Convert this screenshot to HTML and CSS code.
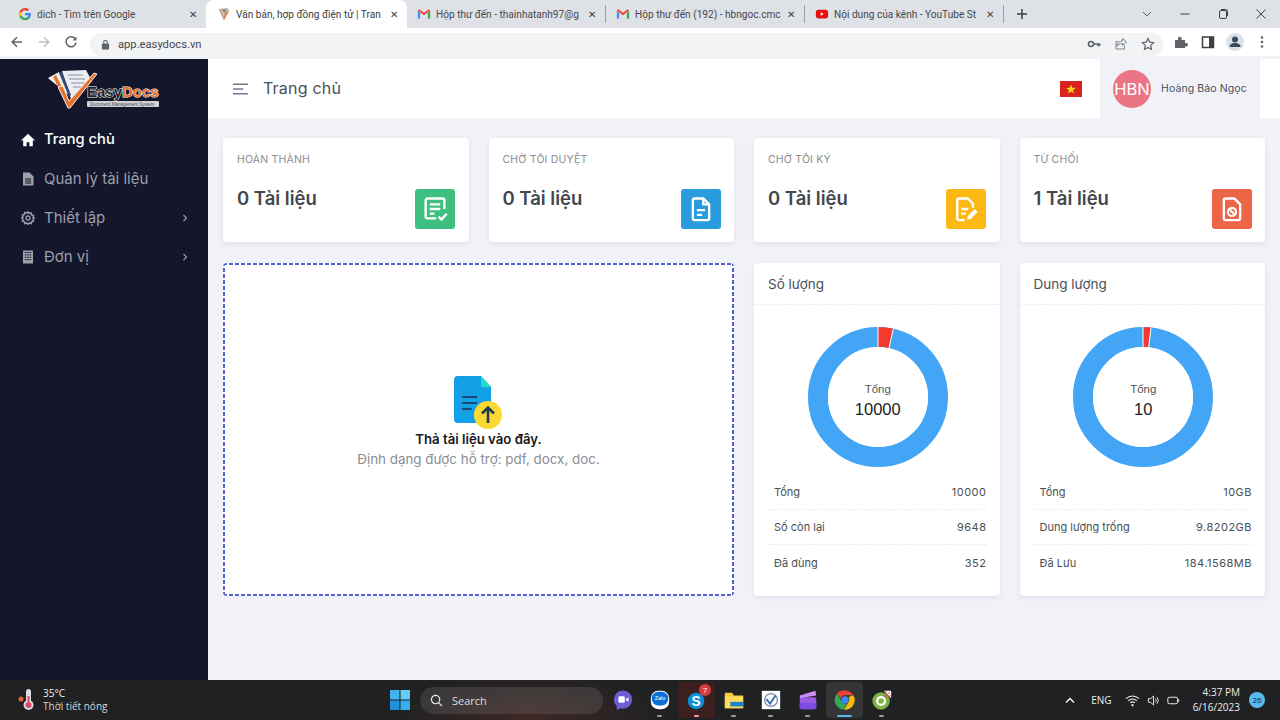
FILE: index.html
```html
<!doctype html>
<html>
  <head>
    <title>Trang chủ</title>
    <link rel="stylesheet" href="styles.css">
  </head>
  <body>
    <!-- Browser tabs -->
    <div class="tabstrip">
      <div class="tab">
        <svg class="fav" viewBox="0 0 16 16"><path d="M14.7 8.200c0-.5 0-1-.1-1.400H8v2.700h3.800c-.2.900-.7 1.600-1.400 2.100v1.700h2.300c1.300-1.200 2-3 2-5.100z" fill="#4285f4"/><path d="M8 15c1.900 0 3.500-.6 4.700-1.700l-2.300-1.700c-.6.400-1.400.7-2.400.7-1.800 0-3.400-1.200-3.900-2.900H1.700v1.800C2.900 13.500 5.300 15 8 15z" fill="#34a853"/><path d="M4.100 9.400c-.3-.9-.3-1.900 0-2.800V4.800H1.700c-1 1.900-1 4.500 0 6.400z" fill="#fbbc05"/><path d="M8 3.800c1 0 2 .4 2.700 1l2-2C11.500 1.700 9.800 1 8 1 5.300 1 2.900 2.500 1.700 4.800l2.400 1.800C4.600 5 6.200 3.800 8 3.800z" fill="#ea4335"/></svg>
        <span class="tab-title">dich - Tìm trên Google</span>
        <span class="tab-x">✕</span>
      </div>
      <div class="tab active">
        <svg class="fav" viewBox="0 0 16 16"><path d="M2 2l10-1 2 3-6 11z" fill="#c9c4bd"/><path d="M2 2l1.500 1L8 13l1-5 4-4 1 0-6 11z" fill="#e8742c"/><path d="M5 2.500l6-.5-2 6z" fill="#8d8f96"/></svg>
        <span class="tab-title">Văn bản, hợp đồng điện tử | Tran</span>
        <span class="tab-x">✕</span>
      </div>
      <div class="tab">
        <svg class="fav" viewBox="0 0 16 16"><path d="M1 4v9h2.500V7z" fill="#4285f4"/><path d="M12.500 7v6H15V4z" fill="#34a853"/><path d="M1 4l7 5.500L15 4l-1.500-1.500L8 6.500 2.500 2.500z" fill="#ea4335"/></svg>
        <span class="tab-title">Hộp thư đến - thainhatanh97@g</span>
        <span class="tab-x">✕</span>
      </div>
      <i class="tab-sep"></i>
      <div class="tab">
        <svg class="fav" viewBox="0 0 16 16"><path d="M1 4v9h2.500V7z" fill="#4285f4"/><path d="M12.500 7v6H15V4z" fill="#34a853"/><path d="M1 4l7 5.500L15 4l-1.500-1.500L8 6.500 2.500 2.500z" fill="#ea4335"/></svg>
        <span class="tab-title">Hộp thư đến (192) - hbngoc.cmc</span>
        <span class="tab-x">✕</span>
      </div>
      <i class="tab-sep"></i>
      <div class="tab">
        <svg class="fav" viewBox="0 0 16 16"><rect x="1" y="3" width="14" height="10" rx="3" fill="#e60f12"/><path d="M6.500 6v4L10 8z" fill="#fff"/></svg>
        <span class="tab-title">Nội dung của kênh - YouTube St</span>
        <span class="tab-x">✕</span>
      </div>
      <i class="tab-sep"></i>
      <svg class="tab-plus" viewBox="0 0 12 12"><path d="M6 1v10M1 6h10" stroke="#3c4043" stroke-width="1.500"/></svg>
      <div class="win-btns">
        <svg viewBox="0 0 12 12"><path d="M2 4l4 4 4-4" fill="none" stroke="#5f6368"/></svg>
        <svg viewBox="0 0 12 12"><path d="M1.500 6h9" stroke="#3c4043"/></svg>
        <svg viewBox="0 0 12 12"><rect x="2.500" y="2.500" width="7" height="8" rx="1.500" fill="none" stroke="#3c4043"/><path d="M4 1.500h4.500q2 0 2 2V8" fill="none" stroke="#3c4043"/></svg>
        <svg viewBox="0 0 12 12"><path d="M1.500 1.500l9 9M10.500 1.500l-9 9" stroke="#3c4043"/></svg>
      </div>
    </div>

    <!-- Browser toolbar -->
    <div class="toolbar">
      <div class="nav-btns">
        <svg viewBox="0 0 14 14"><path d="M12 7H2.500M7 2.200L2.200 7 7 11.800" fill="none" stroke="#5f6368" stroke-width="1.500"/></svg>
        <svg viewBox="0 0 14 14"><path d="M2 7h9.500M7 2.200L11.800 7 7 11.800" fill="none" stroke="#bdc1c6" stroke-width="1.500"/></svg>
        <svg viewBox="0 0 14 14"><path d="M11.500 4.500A5 5 0 1 0 12 7.500" fill="none" stroke="#5f6368" stroke-width="1.500"/><path d="M12.500 1.500v4h-4z" fill="#5f6368"/></svg>
      </div>
      <div class="omnibox">
        <svg class="lock" viewBox="0 0 10 12"><rect x="1" y="5" width="8" height="6.500" rx="1" fill="#5f6368"/><path d="M3 5V3.500a2 2 0 0 1 4 0V5" fill="none" stroke="#5f6368" stroke-width="1.200"/></svg>
        <span class="url">app.easydocs.vn</span>
        <div class="omni-icons">
          <svg viewBox="0 0 14 14"><circle cx="4" cy="7" r="2.500" fill="none" stroke="#5f6368" stroke-width="1.600"/><path d="M6.500 7H13M11 7v2.500M12.800 7v2" stroke="#5f6368" stroke-width="1.500"/></svg>
          <svg viewBox="0 0 14 14"><path d="M8.500 1.500l4 3.500-4 3.500V6.500c-3 0-4.500 1-5.500 3 0-3.500 2-5.500 5.500-5.500z" fill="none" stroke="#80868b"/><path d="M10.500 8.500v3.500h-8.500V4.500h2" fill="none" stroke="#80868b"/></svg>
          <svg viewBox="0 0 14 14"><path d="M7 1.500l1.700 3.700 4 .5-3 2.700.8 4L7 10.400l-3.500 2 .8-4-3-2.700 4-.5z" fill="none" stroke="#5f6368" stroke-width="1.200"/></svg>
        </div>
      </div>
      <div class="ext-btns">
        <svg viewBox="0 0 14 14"><path d="M1 5h3V3.500a1.800 1.800 0 0 1 3.600 0V5h3.400v3h1.200a1.800 1.800 0 0 1 0 3.600H11V13H1z" fill="#5f6368"/></svg>
        <svg viewBox="0 0 14 14"><rect x="1.500" y="2" width="11" height="10.500" fill="none" stroke="#3c4043" stroke-width="1.500"/><rect x="8" y="2" width="4.500" height="10.500" fill="#3c4043"/></svg>
        <span class="profile"><svg viewBox="0 0 18 18"><circle cx="9" cy="6.500" r="3" fill="#3c4a5e"/><path d="M3.500 14c0-3 2.500-4 5.500-4s5.500 1 5.500 4z" fill="#3c4a5e"/></svg></span>
        <svg viewBox="0 0 14 14"><circle cx="7" cy="2.500" r="1.300" fill="#5f6368"/><circle cx="7" cy="7" r="1.300" fill="#5f6368"/><circle cx="7" cy="11.500" r="1.300" fill="#5f6368"/></svg>
      </div>
    </div>

    <!-- App -->
    <div class="app">
      <aside class="sidebar">
        <svg class="logo" viewBox="0 0 114 42">
          <path d="M1 9L12 3l12 25z" fill="#f2f2f2"/>
          <path d="M15 2l24-1 6 11-21 18z" fill="#ecedf2"/>
          <path d="M21 6h15M22 10h16M24 14h14M26 18h8" stroke="#8a8fa5" stroke-width="1"/>
          <path d="M6 8l3-2 12 24-2 3z" fill="#e8742c"/>
          <path d="M12 4l3-1 9 23-2 2z" fill="#3a4a78"/>
          <path d="M11 18l5-1 6 15L47 4l3 1-27 34h-2z" fill="#e8742c" stroke="#fff" stroke-width=".9"/>
          <text class="logo-easy" x="40" y="28">Easy</text>
          <text class="logo-docs" x="75" y="28">Docs</text>
          <rect x="40" y="32" width="72" height="6" rx="1" fill="#d0d0d6"/>
          <text class="logo-sub" x="43" y="36.800">Document Management System</text>
        </svg>
        <nav class="menu">
          <a class="menu-item active">
            <svg viewBox="0 0 14 14"><path d="M7 .8L0 7.500h2.200V13.200h3.400V9.200h2.800v4h3.400V7.500H14z" fill="#fff"/></svg>
            <span>Trang chủ</span>
          </a>
          <a class="menu-item">
            <svg viewBox="0 0 14 14"><path d="M2 .5h6.500L12.500 4.500V13.500H2z" fill="#9d9fab"/><path d="M4.200 7h6M4.200 9h6M4.200 11h6" stroke="#14162b"/></svg>
            <span>Quản lý tài liệu</span>
          </a>
          <a class="menu-item">
            <svg viewBox="0 0 14 14"><path d="M7 .8l1.100 1.700 2-.5.500 1.900 1.900.5-.5 2L13.300 7l-1.300 1.200.5 2-1.900.5-.5 1.900-2-.5L7 13.300l-1.100-1.200-2 .5-.5-1.900-1.900-.5.500-2L.7 7l1.300-1.100-.5-2 1.900-.5.500-1.900 2 .5z" fill="none" stroke="#9d9fab" stroke-width="1.500"/><circle cx="7" cy="7" r="2" fill="none" stroke="#9d9fab" stroke-width="1.300"/></svg>
            <span>Thiết lập</span>
            <svg class="chev" viewBox="0 0 8 8"><path d="M2.500 1l3 3-3 3" fill="none" stroke="#9d9fab" stroke-width="1.100"/></svg>
          </a>
          <a class="menu-item">
            <svg viewBox="0 0 14 14"><path d="M2 .5h10v13H2z" fill="#9d9fab"/><path d="M3.800 2.500h1.700M6.200 2.500h1.700M8.600 2.500h1.700M3.800 4.900h1.700M6.200 4.900h1.700M8.600 4.900h1.700M3.800 7.300h1.700M6.200 7.300h1.700M8.600 7.300h1.700M3.800 9.700h1.700M6.200 9.700h1.700M8.600 9.700h1.700" stroke="#14162b"/></svg>
            <span>Đơn vị</span>
            <svg class="chev" viewBox="0 0 8 8"><path d="M2.500 1l3 3-3 3" fill="none" stroke="#9d9fab" stroke-width="1.100"/></svg>
          </a>
        </nav>
      </aside>

      <div class="page">
        <header class="topbar">
          <svg class="burger" viewBox="0 0 18 14"><path d="M1 2h16M1 7h11M1 12h16" stroke="#74788d" stroke-width="1.500"/></svg>
          <span class="page-title">Trang chủ</span>
          <svg class="flag" viewBox="0 0 22 16"><rect width="22" height="16" fill="#d8231f"/><path d="M11 3.500l1.300 3.300 3.500.2-2.700 2.200.9 3.400-3-1.900-3 1.900.9-3.400L6.200 7l3.500-.2z" fill="#fcd116"/></svg>
          <div class="user">
            <span class="avatar">HBN</span>
            <span class="user-name">Hoàng Bảo Ngọc</span>
          </div>
        </header>

        <main class="content">
          <div class="card stat">
            <div class="stat-text">
              <div class="stat-label">Hoàn thành</div>
              <div class="stat-value">0 Tài liệu</div>
            </div>
            <span class="stat-icon green">
              <svg viewBox="0 0 24 24"><path d="M13 20H5.500A1.500 1.500 0 0 1 4 18.500v-14A1.500 1.500 0 0 1 5.500 3h13A1.500 1.500 0 0 1 20 4.500V12" fill="none" stroke="#fff" stroke-width="2"/><path d="M7.500 8h9M7.500 12h9M7.500 16h4" stroke="#fff" stroke-width="2"/><path d="M15 18.500l2.500 2.500 4.500-5" fill="none" stroke="#fff" stroke-width="2"/></svg>
            </span>
          </div>
          <div class="card stat">
            <div class="stat-text">
              <div class="stat-label">Chờ tôi duyệt</div>
              <div class="stat-value">0 Tài liệu</div>
            </div>
            <span class="stat-icon blue">
              <svg viewBox="0 0 24 24"><path d="M6.500 3H14l5 5v12a1.500 1.500 0 0 1-1.500 1.500h-11A1.500 1.500 0 0 1 5 20V4.500A1.500 1.500 0 0 1 6.500 3z" fill="none" stroke="#fff" stroke-width="2"/><path d="M14 3v5h5M8.500 13h7M8.500 17h4.500" fill="none" stroke="#fff" stroke-width="2"/></svg>
            </span>
          </div>
          <div class="card stat">
            <div class="stat-text">
              <div class="stat-label">Chờ tôi ký</div>
              <div class="stat-value">0 Tài liệu</div>
            </div>
            <span class="stat-icon yellow">
              <svg viewBox="0 0 24 24"><path d="M11 21.500H6A1.500 1.500 0 0 1 4.500 20V4.500A1.500 1.500 0 0 1 6 3h7.500l4.500 4.500V11" fill="none" stroke="#fff" stroke-width="2"/><path d="M8 12h6M8 16h4" stroke="#fff" stroke-width="2"/><path d="M13 21l.5-3 6-6 2.500 2.500-6 6z" fill="#fff"/></svg>
            </span>
          </div>
          <div class="card stat">
            <div class="stat-text">
              <div class="stat-label">Từ chối</div>
              <div class="stat-value">1 Tài liệu</div>
            </div>
            <span class="stat-icon red">
              <svg viewBox="0 0 24 24"><path d="M6.500 3H14l5 5v12a1.500 1.500 0 0 1-1.500 1.500h-11A1.500 1.500 0 0 1 5 20V4.500A1.500 1.500 0 0 1 6.500 3z" fill="none" stroke="#fff" stroke-width="2"/><circle cx="12" cy="14.500" r="3.500" fill="none" stroke="#fff" stroke-width="1.800"/><path d="M9.500 12l5 5" stroke="#fff" stroke-width="1.800"/></svg>
            </span>
          </div>

          <div class="dropzone">
            <svg class="drop-icon" viewBox="0 0 48 54">
              <path d="M4 0h23l10 11v32a4 4 0 0 1-4 4H4a4 4 0 0 1-4-4V4a4 4 0 0 1 4-4z" fill="#12a0e6"/>
              <path d="M27 0l10 11H29a2 2 0 0 1-2-2z" fill="#1fdccb"/>
              <path d="M8 21h15M8 27h15M8 33h10" stroke="#174a78" stroke-width="2"/>
              <circle cx="34" cy="39" r="14" fill="#fdd835"/>
              <path d="M34 47V32M28 37.500l6-6 6 6" fill="none" stroke="#1d3d4a" stroke-width="2.600"/>
            </svg>
            <div class="drop-title">Thả tài liệu vào đây.</div>
            <div class="drop-sub">Định dạng được hỗ trợ: pdf, docx, doc.</div>
          </div>

          <div class="card usage">
            <div class="usage-head">Số lượng</div>
            <div class="donut">
              <svg viewBox="0 0 140 140">
                <circle cx="70" cy="70" r="60" fill="none" stroke="#42a5f5" stroke-width="20"/>
                <circle cx="70" cy="70" r="60" fill="none" stroke="#f4392f" stroke-width="20" stroke-dasharray="13.300 364" transform="rotate(-90 70 70)"/>
                <path d="M70 0v21M70 70L85.300 1.700" stroke="#fff" stroke-width="1"/>
                <circle cx="70" cy="70" r="50" fill="#fff"/>
              </svg>
              <div class="donut-text"><span>Tổng</span><b>10000</b></div>
            </div>
            <div class="usage-rows">
              <div class="usage-row"><span>Tổng</span><span>10000</span></div>
              <div class="usage-row"><span>Số còn lại</span><span>9648</span></div>
              <div class="usage-row"><span>Đã dùng</span><span>352</span></div>
            </div>
          </div>

          <div class="card usage">
            <div class="usage-head">Dung lượng</div>
            <div class="donut">
              <svg viewBox="0 0 140 140">
                <circle cx="70" cy="70" r="60" fill="none" stroke="#42a5f5" stroke-width="20"/>
                <circle cx="70" cy="70" r="60" fill="none" stroke="#f4392f" stroke-width="20" stroke-dasharray="6.900 371" transform="rotate(-90 70 70)"/>
                <path d="M70 0v21M70 70L78 .5" stroke="#fff" stroke-width="1"/>
                <circle cx="70" cy="70" r="50" fill="#fff"/>
              </svg>
              <div class="donut-text"><span>Tổng</span><b>10</b></div>
            </div>
            <div class="usage-rows">
              <div class="usage-row"><span>Tổng</span><span>10GB</span></div>
              <div class="usage-row"><span>Dung lượng trống</span><span>9.8202GB</span></div>
              <div class="usage-row"><span>Đã Lưu</span><span>184.1568MB</span></div>
            </div>
          </div>
        </main>
      </div>
    </div>

    <!-- Windows taskbar -->
    <footer class="taskbar">
      <div class="weather">
        <svg viewBox="0 0 18 24"><circle cx="3" cy="11" r="2.500" fill="#e0662a"/><rect x="8" y="1" width="5" height="15" rx="2.500" fill="#d9dde2"/><circle cx="10.500" cy="17" r="5" fill="#d9dde2"/><circle cx="10.500" cy="17" r="3" fill="#d84a6a"/><rect x="9.500" y="8" width="2" height="8" fill="#d84a6a"/></svg>
        <div class="weather-text"><span>35°C</span><span>Thời tiết nóng</span></div>
      </div>
      <div class="task-center">
        <svg class="win" viewBox="0 0 20 20"><rect width="9.500" height="9.500" fill="#3fb4f0"/><rect x="10.500" width="9.500" height="9.500" fill="#63cdf7"/><rect y="10.500" width="9.500" height="9.500" fill="#1e90dc"/><rect x="10.500" y="10.500" width="9.500" height="9.500" fill="#35aeee"/></svg>
        <div class="search">
          <svg viewBox="0 0 14 14"><circle cx="6" cy="6" r="4.500" fill="none" stroke="#e8e8e8" stroke-width="1.300"/><path d="M9.300 9.300L13 13" stroke="#e8e8e8" stroke-width="1.300"/></svg>
          <span>Search</span>
        </div>
        <div class="apps">
          <span class="app-ico"><svg viewBox="0 0 24 24"><path d="M12 1.500a10 10 0 0 1 0 20c-1 0-2-.2-2.800-.4L5 23l.3-4.300A10 10 0 0 1 12 1.500z" fill="#6b5ed6"/><rect x="7" y="8" width="7" height="7" rx="1.500" fill="#fff"/><path d="M15 11l3-2v5l-3-2z" fill="#fff"/></svg></span>
          <span class="app-ico on"><svg viewBox="0 0 24 24"><rect x="2" y="2" width="20" height="20" rx="8" fill="#fff"/><rect x="3" y="3" width="18" height="15" rx="7" fill="#0d6fd8"/><text class="zalo" x="12" y="12.500">Zalo</text></svg></span>
          <span class="app-ico on hot"><svg viewBox="0 0 24 24"><circle cx="11" cy="13" r="9" fill="#0a8fd8"/><text class="skype" x="11" y="18">S</text></svg><i class="task-badge">7</i></span>
          <span class="app-ico on"><svg viewBox="0 0 24 24"><path d="M2 4h8l2 3h10v14H2z" fill="#f7c83b"/><rect x="2" y="8" width="20" height="13" fill="#fddc5c"/><rect x="8" y="14" width="14" height="5" fill="#1a84c9"/></svg></span>
          <span class="app-ico on"><svg viewBox="0 0 24 24"><rect x="2" y="2" width="20" height="20" fill="#fff"/><circle cx="12" cy="12" r="7" fill="none" stroke="#7f8fa8" stroke-width="1.500"/><path d="M7 11l4 5 6-9" fill="none" stroke="#2f6fb0" stroke-width="2"/></svg></span>
          <span class="app-ico on"><svg viewBox="0 0 24 24"><rect x="3" y="9" width="18" height="13" rx="2" fill="#a05be6"/><path d="M3 7l17-5 1 5-18 3z" fill="#c98df5"/><rect x="3" y="15" width="18" height="7" rx="2" fill="#7d4fe0"/></svg></span>
          <span class="app-ico on now"><svg viewBox="0 0 24 24"><path d="M12 1.500a10.500 10.500 0 0 1 9.100 5.300H12a5.200 5.200 0 0 0-4.900 3.500L3.400 5A10.500 10.500 0 0 1 12 1.500z" fill="#ea4335"/><path d="M21.100 6.800A10.500 10.500 0 0 1 11 22.500l4.500-7.800a5.200 5.200 0 0 0 .4-6z" fill="#fbbc05"/><path d="M11 22.500A10.500 10.500 0 0 1 3.400 5l4.700 8a5.200 5.200 0 0 0 5.700 3.300z" fill="#34a853"/><circle cx="12" cy="12" r="4" fill="#4285f4"/></svg></span>
          <span class="app-ico on"><svg viewBox="0 0 24 24"><circle cx="11" cy="13" r="9.500" fill="#7cb342"/><circle cx="11" cy="13" r="5.500" fill="#fff"/><circle cx="11" cy="13" r="3" fill="#7cb342"/><path d="M14 2h8v8z" fill="#fff"/><path d="M15 9l6-6M16 10l6-3M14 8l3-6" stroke="#d9534f"/></svg></span>
        </div>
      </div>
      <div class="tray">
        <svg class="tray-ico" viewBox="0 0 12 12"><path d="M2 8l4-4 4 4" fill="none" stroke="#fff" stroke-width="1.300"/></svg>
        <span class="lang">ENG</span>
        <svg class="tray-ico wifi" viewBox="0 0 16 14"><path d="M1 5a10 10 0 0 1 14 0M3.300 7.300a7 7 0 0 1 9.400 0M5.500 9.500a4 4 0 0 1 5 0" fill="none" stroke="#eee" stroke-width="1.100"/><circle cx="8" cy="12" r="1.200" fill="#eee"/></svg>
        <svg class="tray-ico" viewBox="0 0 14 14"><path d="M1.500 5v4h2.500l3 2.800V2.200L4 5z" fill="none" stroke="#eee"/><path d="M9 5a3 3 0 0 1 0 4M10.800 3.500a5.500 5.500 0 0 1 0 7" fill="none" stroke="#eee"/></svg>
        <svg class="tray-ico" viewBox="0 0 16 12"><rect x="1" y="2" width="12" height="8" rx="2" fill="none" stroke="#eee" stroke-width="1.200"/><rect x="13.800" y="4.500" width="1.200" height="3" fill="#eee"/></svg>
        <div class="clock"><span>4:37 PM</span><span>6/16/2023</span></div>
        <span class="notif">26</span>
      </div>
    </footer>
  </body>
</html>
```

FILE: styles.css
```css
* { margin: 0; padding: 0; box-sizing: border-box; }
html, body { height: 720px; overflow: hidden; }
body { display: flex; flex-direction: column; font-family: Inter, "Noto Sans", sans-serif; background: #f1f2f8; color: #343a40; }
svg { display: block; flex: none; }

/* Browser tabs */
.tabstrip { height: 28px; flex: none; display: flex; align-items: center; padding-left: 8px; background: #dee1e6; font-family: Roboto, sans-serif; font-size: 10.100px; color: #45494e; }
.tab { width: 198px; height: 28px; padding: 0 6px 0 10px; display: flex; align-items: center; }
.tab.active { width: 201px; padding-left: 11px; background: #fff; border-radius: 8px 8px 0 0; color: #3c4043; }
.tab-sep { width: 1px; height: 18px; background: #9aa0a6; flex: none; }
.fav { width: 14px; height: 14px; margin-right: 5px; }
.tab-title { flex: 1; min-width: 0; white-space: nowrap; overflow: hidden; }
.tab-x { width: 14px; flex: none; font-size: 10px; text-align: center; color: #3c4043; }
.tab-plus { width: 12px; height: 12px; margin-left: 12px; }
.win-btns { margin-left: auto; margin-right: 13px; display: flex; gap: 26px; }
.win-btns svg { width: 12px; height: 12px; }

/* Browser toolbar */
.toolbar { height: 28px; flex: none; display: flex; align-items: center; background: #fff; padding: 0 11px 0 10px; }
.nav-btns { display: flex; gap: 13px; margin-right: 12px; }
.nav-btns svg { width: 14px; height: 14px; }
.omnibox { width: 1073px; height: 23px; margin-top: 4px; display: flex; align-items: center; border-radius: 12px; background: #f1f3f4; padding: 0 8px 0 11px; }
.lock { width: 9px; height: 11px; margin-right: 8px; }
.url { font-family: Roboto, sans-serif; font-size: 11.200px; color: #45494e; }
.omni-icons { margin-left: auto; display: flex; gap: 13px; }
.omni-icons svg { width: 14px; height: 14px; }
.ext-btns { display: flex; align-items: center; margin-left: 11px; gap: 13px; }
.ext-btns svg { width: 14px; height: 14px; }
.profile { width: 18px; height: 18px; margin: 0 -2px; border-radius: 50%; background: #dbe1ea; }
.ext-btns .profile svg { width: 18px; height: 18px; }

/* App shell */
.app { flex: 1; min-height: 0; display: flex; margin-top: 3px; }
.sidebar { width: 208px; flex: none; background: #14162b; }
.logo { width: 114px; height: 42px; margin: 10px 0 0 47px; }
.logo-easy, .logo-docs { font-family: "Liberation Sans", sans-serif; font-size: 15px; font-weight: 700; paint-order: stroke; stroke: #fff; stroke-width: 1px; }
.logo-easy { fill: #22232c; }
.logo-docs { fill: #e8742c; }
.logo-sub { font-family: "Liberation Sans", sans-serif; font-size: 4.500px; fill: #4a4c58; }
.menu { margin-top: 9px; }
.menu-item { height: 39px; padding: 0 19px 0 21px; display: flex; align-items: center; color: #9d9fab; font-size: 15px; line-height: 37px; }
.menu-item svg { width: 14px; height: 14px; margin-right: 9px; }
.menu-item.active { color: #fff; font-weight: 500; font-size: 14.700px; }
.menu-item svg.chev { width: 8px; height: 8px; margin: 0 0 0 auto; }

.page { flex: 1; min-width: 0; display: flex; flex-direction: column; }
.topbar { height: 59px; flex: none; display: flex; align-items: center; padding: 0 20px 0 24px; background: #fff; }
.burger { width: 17px; height: 14px; margin-right: 14px; }
.page-title { font-size: 16px; line-height: 18px; padding-bottom: 2px; letter-spacing: .2px; color: #495057; }
.flag { width: 22px; height: 16px; margin-left: auto; margin-right: 18px; }
.user { width: 160px; height: 59px; display: flex; align-items: center; padding-left: 13px; background: #f1f2f8; }
.avatar { width: 38px; height: 38px; display: flex; align-items: center; justify-content: center; border-radius: 50%; background: #ec7585; color: #fff; font-size: 16.500px; }
.user-name { margin-left: 10px; font-size: 10.500px; letter-spacing: .1px; color: #495057; }

/* Dashboard grid */
.content { display: grid; grid-template-columns: repeat(4, 1fr); grid-template-rows: 104px 333px; gap: 21px 20px; padding: 20px 15px 0; }
.card { background: #fff; border-radius: 4px; box-shadow: 0 2px 5px rgba(18, 38, 63, .08); }
.stat { display: flex; justify-content: space-between; padding: 15px 13.500px 13px 14px; }
.stat-label { font-size: 10.500px; line-height: 13px; letter-spacing: .2px; text-transform: uppercase; color: #8a8d93; }
.stat-value { margin-top: 19px; font-size: 18.500px; line-height: 26px; font-weight: 600; color: #42474d; }
.stat-icon { width: 40px; height: 40px; margin-top: auto; display: flex; align-items: center; justify-content: center; border-radius: 3px; }
.stat-icon svg { width: 28px; height: 28px; }
.green { background: #3dc07f; }
.blue { background: #2a9bdc; }
.yellow { background: #fdb913; }
.red { background: #ec6547; }

.dropzone {
  grid-column: span 2;
  display: flex;
  flex-direction: column;
  align-items: center;
  justify-content: center;
  padding-bottom: 14px;
  border-radius: 4px;
  background-color: #fff;
  background-image:
    repeating-linear-gradient(90deg, #5462d0 0 4px, transparent 4px 6px),
    repeating-linear-gradient(90deg, #5462d0 0 4px, transparent 4px 6px),
    repeating-linear-gradient(0deg, #5462d0 0 4px, transparent 4px 6px),
    repeating-linear-gradient(0deg, #5462d0 0 4px, transparent 4px 6px);
  background-size: 100% 2px, 100% 2px, 2px 100%, 2px 100%;
  background-position: 0 0, 0 100%, 0 0, 100% 0;
  background-repeat: no-repeat;
}
.drop-icon { width: 48px; height: 54px; margin-left: -2px; }
.drop-title { font-size: 13.200px; font-weight: 600; line-height: 18px; color: #16181c; }
.drop-sub { margin-top: 1px; font-size: 13.400px; line-height: 20px; color: #8a8d93; }

.usage-head { height: 42px; padding: 0 14px; display: flex; align-items: center; font-size: 13.500px; color: #495057; border-bottom: 1px dashed #eceef2; }
.donut { position: relative; width: 140px; height: 140px; margin: 22px auto 0; left: 1px; }
.donut svg { width: 140px; height: 140px; }
.donut-text { position: absolute; inset: 0; padding-top: 6px; display: flex; flex-direction: column; align-items: center; justify-content: center; font-family: "Liberation Sans", sans-serif; }
.donut-text span { font-size: 11.500px; line-height: 14px; color: #555; }
.donut-text b { margin-top: 3px; font-size: 16.500px; line-height: 20px; font-weight: 400; color: #222; }
.usage-rows { margin: 7px 13px 0 14px; }
.usage-row { height: 35.500px; padding: 1px 0 0 6px; display: flex; align-items: center; justify-content: space-between; font-size: 11px; color: #495057; border-bottom: 1px dashed #eceef2; }
.usage-row span:last-child { letter-spacing: .5px; }
.usage-row:last-child { border-bottom: 0; }

/* Windows taskbar */
.taskbar { height: 40px; flex: none; display: flex; align-items: center; color: #eee; background: radial-gradient(ellipse 140px 50px at 530px 40px, #3e2826, transparent), #1f2122; font-family: "Open Sans", sans-serif; }
.weather { display: flex; align-items: center; width: 390px; padding-left: 18px; }
.weather svg { width: 18px; height: 24px; margin-right: 7px; }
.weather-text { display: flex; flex-direction: column; font-size: 10px; line-height: 13px; }
.weather-text span + span { color: #d5d5d5; }
.task-center { display: flex; align-items: center; }
.win { width: 20px; height: 20px; }
.search { width: 183px; height: 27px; margin-left: 10px; display: flex; align-items: center; gap: 9px; padding-left: 10px; border-radius: 14px; background: rgba(255, 255, 255, .1); font-size: 11px; color: #ddd; }
.search svg { width: 13px; height: 13px; }
.apps { display: flex; margin-left: 1px; }
.app-ico { position: relative; width: 37px; height: 36px; display: flex; align-items: center; justify-content: center; }
.app-ico svg { width: 22px; height: 22px; }
.app-ico.on::after { content: ""; position: absolute; left: 16px; bottom: 1px; width: 5px; height: 2px; border-radius: 1px; background: #999; }
.app-ico.hot { background: #3a2120; }
.app-ico.hot::after { background: #f59ca6; }
.app-ico.now { background: #333536; border-radius: 4px; }
.app-ico.now::after { left: 11px; width: 15px; background: #5fb5f0; }
.task-badge { position: absolute; top: 2px; right: 4px; width: 12px; height: 12px; border-radius: 50%; background: #d83b3b; color: #fff; font-size: 8px; line-height: 12px; font-style: normal; text-align: center; }
.zalo { font-family: "Liberation Sans", sans-serif; font-size: 6px; fill: #fff; text-anchor: middle; }
.skype { font-family: "Liberation Sans", sans-serif; font-size: 15px; font-weight: 700; fill: #fff; text-anchor: middle; }
.tray { margin-left: auto; display: flex; align-items: center; padding-right: 15px; font-size: 10px; }
.tray-ico { width: 13px; height: 13px; margin-right: 7px; }
.tray-ico:first-child { width: 12px; margin-right: 15px; }
.tray-ico.wifi { width: 15px; margin-right: 7px; }
.lang { margin-right: 13px; }
.clock { display: flex; flex-direction: column; align-items: flex-end; margin: 0 9px 0 6px; font-size: 10px; line-height: 15px; }
.notif { width: 16px; height: 16px; border-radius: 50%; background: #5ab9ee; color: #123; font-size: 8px; line-height: 16px; text-align: center; }
```
